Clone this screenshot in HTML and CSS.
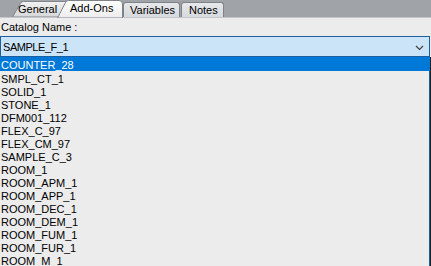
FILE: index.html
```html
<!DOCTYPE html>
<html>
<head>
<meta charset="utf-8">
<link rel="stylesheet" href="styles.css">
</head>
<body>
<div class="window">
  <div class="tabbar">
    <div class="tab tab-general">
      <svg class="shape" viewBox="0 0 54 17" preserveAspectRatio="none">
        <defs>
          <linearGradient id="gGen" x1="0" y1="0" x2="0" y2="1">
            <stop offset="0" stop-color="#f2f2f2"/>
            <stop offset="1" stop-color="#d6d7d9"/>
          </linearGradient>
        </defs>
        <path d="M0.5 17 L8.5 2.5 Q9.5 0.5 11.5 0.5 L54 0.5 L54 17 Z" fill="url(#gGen)" stroke="#7f8388" stroke-width="1"/>
      </svg>
      <span class="label">General</span>
    </div>
    <div class="tab tab-addons">
      <svg class="shape" viewBox="0 0 66 18" preserveAspectRatio="none">
        <defs>
          <linearGradient id="gAdd" x1="0" y1="0" x2="0" y2="1">
            <stop offset="0" stop-color="#ffffff"/>
            <stop offset="1" stop-color="#ececec"/>
          </linearGradient>
        </defs>
        <path d="M0.5 18 L8.5 2.5 Q9.5 0.5 11.5 0.5 L62 0.5 Q65.5 0.5 65.5 4 L65.5 18 Z" fill="url(#gAdd)" stroke="#7f8388" stroke-width="1"/>
      </svg>
      <span class="label">Add-Ons</span>
    </div>
    <div class="tab tab-plain tab-variables"><span class="label">Variables</span></div>
    <div class="tab tab-plain tab-notes"><span class="label">Notes</span></div>
  </div>
  <div class="content">
    <div class="field-label">Catalog Name :</div>
    <div class="combo">
      <span class="combo-text">SAMPLE_F_1</span>
      <svg class="chevron" width="9" height="6" viewBox="0 0 9 6">
        <path d="M1 1 L4.5 4.5 L8 1" fill="none" stroke="#404040" stroke-width="1.2"/>
      </svg>
    </div>
    <div class="list">
      <div class="item selected">COUNTER_28</div>
      <div class="item">SMPL_CT_1</div>
      <div class="item">SOLID_1</div>
      <div class="item">STONE_1</div>
      <div class="item">DFM001_112</div>
      <div class="item">FLEX_C_97</div>
      <div class="item">FLEX_CM_97</div>
      <div class="item">SAMPLE_C_3</div>
      <div class="item">ROOM_1</div>
      <div class="item">ROOM_APM_1</div>
      <div class="item">ROOM_APP_1</div>
      <div class="item">ROOM_DEC_1</div>
      <div class="item">ROOM_DEM_1</div>
      <div class="item">ROOM_FUM_1</div>
      <div class="item">ROOM_FUR_1</div>
      <div class="item">ROOM_M_1</div>
    </div>
  </div>
</div>
</body>
</html>
```

FILE: styles.css
```css
html, body {
  margin: 0;
  padding: 0;
  width: 431px;
  height: 266px;
  overflow: hidden;
  background: #ececec;
  font-family: "Liberation Sans", Arial, sans-serif;
  font-size: 11px;
  color: #000;
}

.window {
  width: 431px;
  height: 266px;
  display: flex;
  flex-direction: column;
}

.tabbar {
  height: 18px;
  background: #a0a4a9;
  display: flex;
  align-items: flex-end;
  padding-left: 12px;
  border-bottom: 1px solid #c4c6c9;
  box-sizing: border-box;
  flex: none;
}

.tab {
  position: relative;
  height: 16px;
  line-height: 16px;
  box-sizing: border-box;
  color: #000;
}

.tab .shape {
  position: absolute;
  left: 0;
  top: 0;
  width: 100%;
  height: 100%;
  z-index: 0;
}

.tab .label {
  position: relative;
  z-index: 1;
}

.tab-general {
  width: 54px;
  padding-left: 6px;
  height: 16px;
  margin-top: 1px;
  z-index: 1;
}

.tab-addons {
  width: 66px;
  height: 18px;
  line-height: 17px;
  padding-left: 13px;
  margin-left: -9px;
  margin-bottom: -1px;
  z-index: 3;
}

.tab-plain {
  height: 15px;
  line-height: 15px;
  border: 1px solid #7f8388;
  border-bottom: none;
  border-radius: 3px 3px 0 0;
  background: linear-gradient(#e6e8eb, #d6d9dd);
  z-index: 2;
}

.tab-variables {
  width: 57px;
  padding-left: 6px;
}

.tab-notes {
  width: 43px;
  padding-left: 7px;
  margin-left: 1px;
}

.content {
  flex: 1;
  display: flex;
  flex-direction: column;
}

.field-label {
  height: 17px;
  line-height: 15px;
  padding-top: 2px;
  padding-left: 1px;
  box-sizing: border-box;
  flex: none;
}

.combo {
  height: 21px;
  box-sizing: border-box;
  width: 430px;
  margin-top: 1px;
  border: 1px solid #1b5f9e;
  border-left-color: #1b5f9e;
  background: #cce4f7;
  display: flex;
  align-items: center;
  justify-content: space-between;
  padding: 1px 5px 0 2px;
  flex: none;
}

.combo-text {
  letter-spacing: -0.45px;
}

.chevron {
  display: block;
  margin-top: 1px;
}

.list {
  flex: 1;
  width: 431px;
  box-sizing: border-box;
  border-right: 1px solid #202020;
  box-shadow: inset -1px 0 0 #1b5f9e;
  background: #ececec;
  overflow: hidden;
}

.item {
  height: 13px;
  line-height: 14px;
  padding-top: 1px;
  padding-left: 1px;
  box-sizing: border-box;
  overflow: visible;
  white-space: nowrap;
}

.item.selected {
  height: 14px;
  background: #0078d7;
  color: #fff;
}
```
